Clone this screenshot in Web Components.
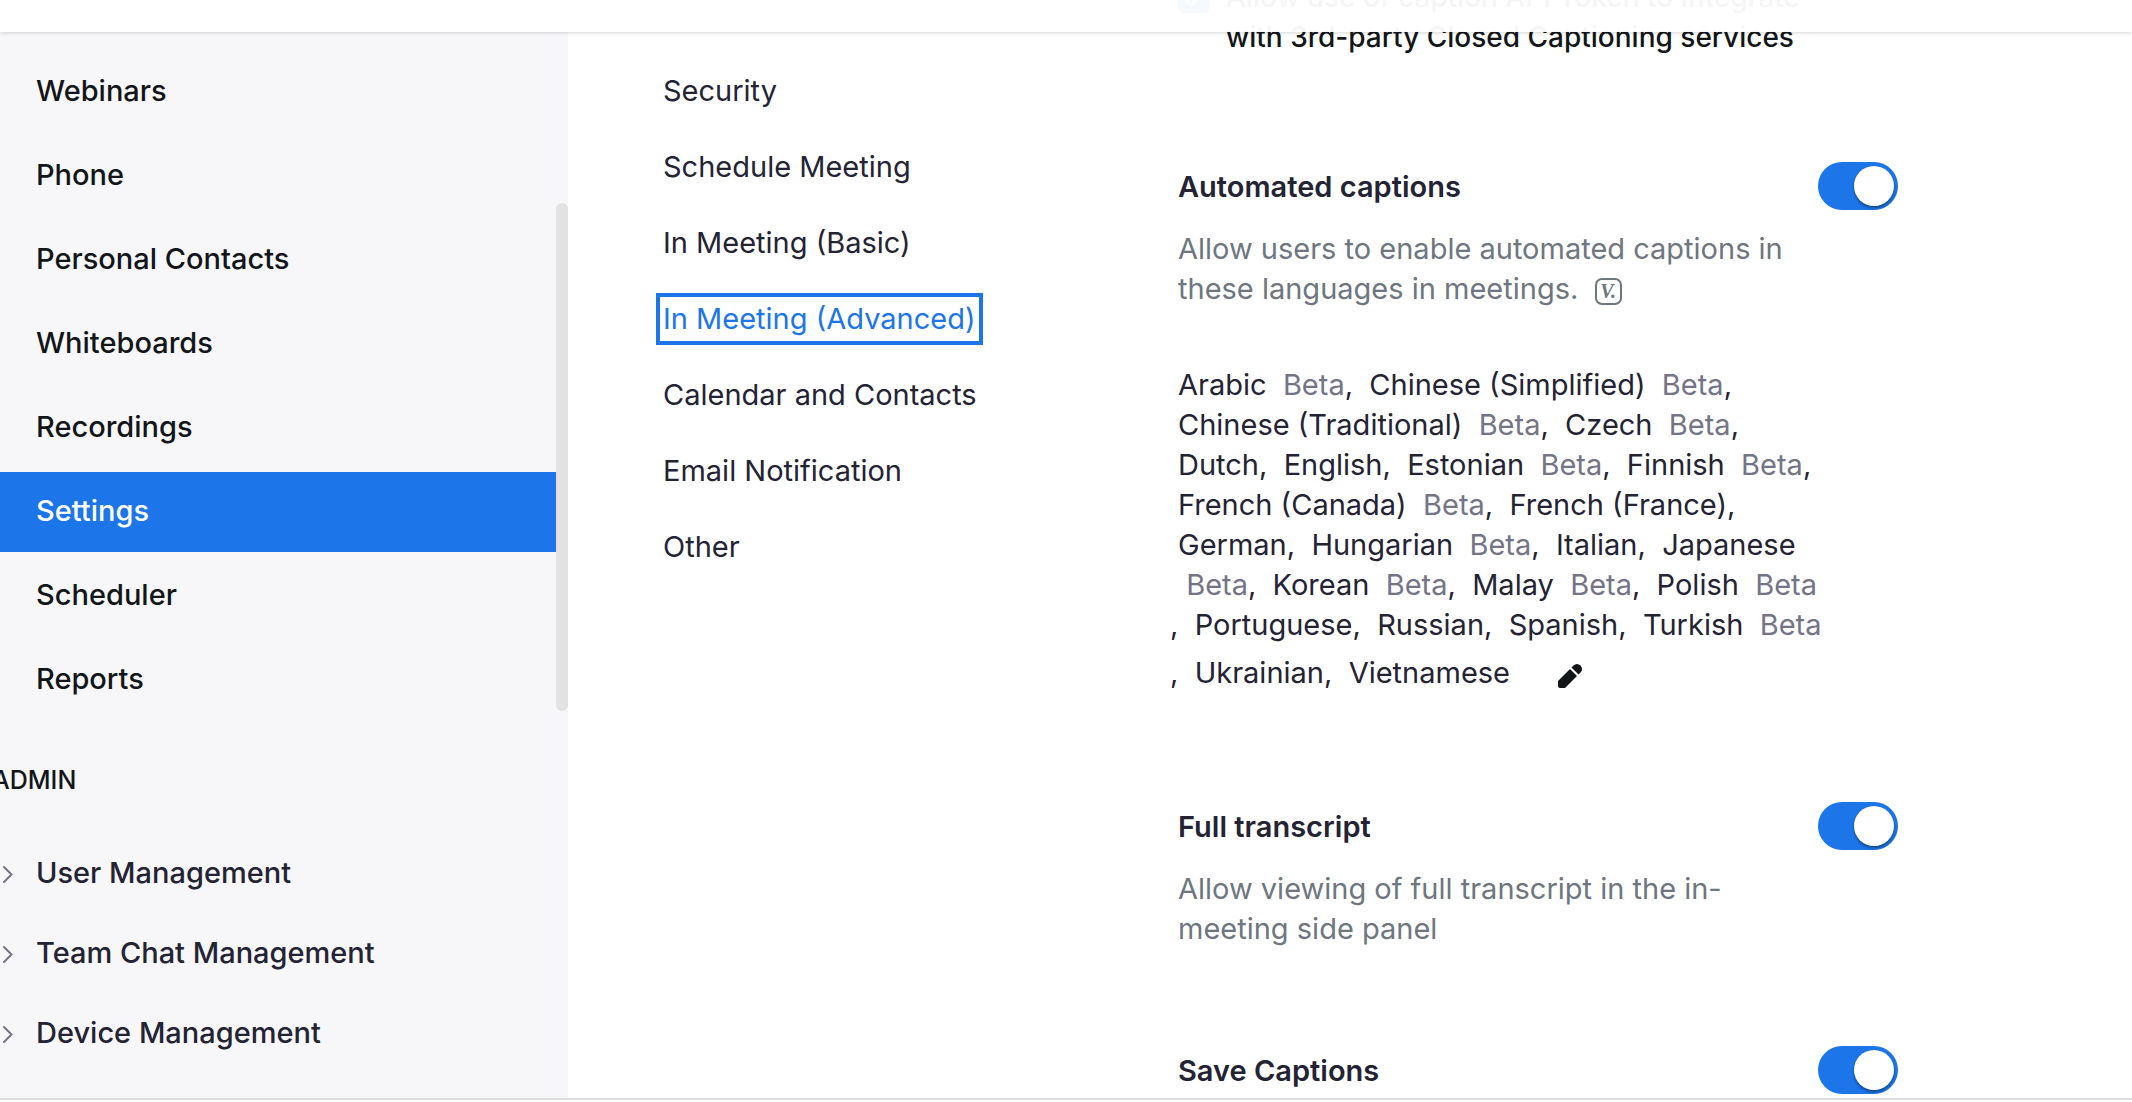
<!DOCTYPE html>
<html lang="en">
<head>
<meta charset="utf-8">
<meta name="viewport" content="width=device-width, initial-scale=1">
<title>Settings</title>
<style>
  :root {
    --blue: #1c75e9;
    --ink: #232333;
    --black: #131619;
    --muted: #6e7680;
    --beta: #747487;
    --panel: #f7f7fa;
  }
  body {
    margin: 0;
    background: #fff;
    color: var(--ink);
    font: 400 29px/40px Inter, "Liberation Sans", sans-serif;
  }
</style>
</head>
<body>
<settings-page>
  <side-nav slot="side">
    <side-item>Webinars</side-item>
    <side-item>Phone</side-item>
    <side-item>Personal Contacts</side-item>
    <side-item>Whiteboards</side-item>
    <side-item>Recordings</side-item>
    <side-item active>Settings</side-item>
    <side-item>Scheduler</side-item>
    <side-item>Reports</side-item>
    <side-group slot="admin">User Management</side-group>
    <side-group slot="admin">Team Chat Management</side-group>
    <side-group slot="admin">Device Management</side-group>
  </side-nav>

  <section-nav slot="sections">
    <section-link>Security</section-link>
    <section-link>Schedule Meeting</section-link>
    <section-link>In Meeting (Basic)</section-link>
    <section-link active>In Meeting (Advanced)</section-link>
    <section-link>Calendar and Contacts</section-link>
    <section-link>Email Notification</section-link>
    <section-link>Other</section-link>
  </section-nav>

  <caption-token-option></caption-token-option>
  <setting-row name="Automated captions">
    Allow users to enable automated captions in<br>these languages in meetings. <modified-tag></modified-tag>
    <language-list slot="extra"></language-list>
  </setting-row>
  <setting-row name="Full transcript">
    Allow viewing of full transcript in the in-<br>meeting side panel
  </setting-row>
  <setting-row name="Save Captions"></setting-row>
</settings-page>

<script>
class SettingsPage extends HTMLElement {
  connectedCallback() {
    if (this.shadowRoot) return;
    this.attachShadow({ mode: 'open' }).innerHTML = `
      <style>
        :host {
          display: grid;
          grid-template-columns: 568px 610px minmax(0, 1fr);
          height: calc(100vh - 2px);
          overflow: hidden;
          position: relative;
          box-sizing: border-box;
          border-bottom: 2px solid #dcdcdc;
        }

        header {
          position: absolute;
          top: 0;
          left: 0;
          right: 0;
          height: 32px;
          background: rgba(255, 255, 255, 0.96);
          box-shadow: 0 1px 4px rgba(0, 0, 0, 0.16);
          z-index: 1;
        }

        main {
          max-width: 720px;
          margin-top: -23px;
        }
      </style>
      <header></header>
      <slot name="side"></slot>
      <slot name="sections"></slot>
      <main><slot></slot></main>
    `;
  }
}

class SideNav extends HTMLElement {
  connectedCallback() {
    if (this.shadowRoot) return;
    this.attachShadow({ mode: 'open' }).innerHTML = `
      <style>
        :host {
          display: flex;
          background: var(--panel);
          min-height: 0;
        }

        nav {
          flex: 1;
          padding-top: 52px;
          font-weight: 500;
          overflow: hidden;
        }

        .personal {
          display: flex;
          flex-direction: column;
          gap: 4px;
        }

        h2 {
          margin: 40px 0 34px -8px;
          font-size: 25px;
          font-weight: 500;
          line-height: 40px;
          color: var(--black);
        }

        .thumb {
          width: 12px;
          height: 508px;
          margin-top: 203px;
          border-radius: 6px;
          background: #e2e2e2;
        }
      </style>
      <nav aria-label="Account">
        <div class="personal"><slot></slot></div>
        <h2>ADMIN</h2>
        <slot name="admin"></slot>
      </nav>
      <div class="thumb"></div>
    `;
  }
}

class SideItem extends HTMLElement {
  connectedCallback() {
    if (this.shadowRoot) return;
    this.attachShadow({ mode: 'open' }).innerHTML = `
      <style>
        :host { display: block; }

        a {
          display: block;
          padding: 19px 36px 21px;
          color: var(--black);
          text-decoration: none;
        }

        :host([active]) a {
          background: var(--blue);
          color: #fff;
        }
      </style>
      <a href="#"><slot></slot></a>
    `;
  }
}

class SideGroup extends HTMLElement {
  connectedCallback() {
    if (this.shadowRoot) return;
    this.attachShadow({ mode: 'open' }).innerHTML = `
      <style>
        :host { display: block; }

        a {
          display: flex;
          align-items: center;
          gap: 20px;
          padding: 19px 0 21px;
          color: var(--ink);
          text-decoration: none;
        }

        svg {
          width: 16px;
          height: 20px;
          fill: none;
          stroke: var(--beta);
          stroke-width: 2;
          stroke-linecap: round;
          stroke-linejoin: round;
        }
      </style>
      <a href="#">
        <svg viewBox="0 0 16 20"><path d="M4 4l7.500 7.500-7.500 7.500"/></svg>
        <slot></slot>
      </a>
    `;
  }
}

class SectionNav extends HTMLElement {
  connectedCallback() {
    if (this.shadowRoot) return;
    this.attachShadow({ mode: 'open' }).innerHTML = `
      <style>
        :host { display: block; }

        nav {
          display: flex;
          flex-direction: column;
          align-items: flex-start;
          gap: 24px;
          padding: 65px 0 0 88px;
        }
      </style>
      <nav aria-label="Settings sections"><slot></slot></nav>
    `;
  }
}

class SectionLink extends HTMLElement {
  connectedCallback() {
    if (this.shadowRoot) return;
    this.attachShadow({ mode: 'open' }).innerHTML = `
      <style>
        :host { display: block; }

        a {
          display: block;
          line-height: 52px;
          padding: 0 7px;
          color: var(--ink);
          text-decoration: none;
        }

        :host([active]) a {
          color: var(--blue);
          outline: 4px solid var(--blue);
          outline-offset: -4px;
        }
      </style>
      <a href="#"><slot></slot></a>
    `;
  }
}

class CaptionTokenOption extends HTMLElement {
  connectedCallback() {
    if (this.shadowRoot) return;
    this.attachShadow({ mode: 'open' }).innerHTML = `
      <style>
        :host {
          display: block;
          margin-bottom: 105px;
          color: var(--black);
          font-size: 28px;
          font-weight: 500;
        }

        label {
          display: flex;
          gap: 16px;
        }

        input {
          appearance: none;
          flex: none;
          display: grid;
          place-items: center;
          width: 32px;
          height: 32px;
          margin: 4px 0 0;
          border-radius: 6px;
          background: var(--blue);
        }

        /* tick */
        input::before {
          content: "";
          width: 7px;
          height: 14px;
          border: solid #fff;
          border-width: 0 3px 3px 0;
          rotate: 45deg;
        }
      </style>
      <label>
        <input type="checkbox" checked>
        <span>Allow use of caption API Token to integrate<br>with 3rd-party Closed Captioning services</span>
      </label>
    `;
  }
}

class SettingRow extends HTMLElement {
  connectedCallback() {
    if (this.shadowRoot) return;
    const name = this.getAttribute('name');
    this.attachShadow({ mode: 'open' }).innerHTML = `
      <style>
        :host {
          display: block;
          margin-bottom: 97px;
        }

        .head {
          display: flex;
          align-items: center;
          justify-content: space-between;
          height: 48px;
        }

        label {
          padding-top: 2px;
          font-weight: 600;
        }

        input {
          appearance: none;
          flex: none;
          display: grid;
          justify-content: end;
          width: 80px;
          height: 48px;
          margin: 0;
          padding: 4px;
          box-sizing: border-box;
          border-radius: 24px;
          background: var(--blue);
        }

        input::before {
          content: "";
          width: 40px;
          height: 40px;
          border-radius: 50%;
          background: #fff;
          box-shadow: 0 2px 3px rgba(0, 0, 0, 0.4);
        }

        p {
          margin: 19px 0 0;
          color: var(--muted);
        }
      </style>
      <div class="head">
        <label for="toggle">${name}</label>
        <input id="toggle" type="checkbox" role="switch" checked>
      </div>
      <p><slot></slot></p>
      <slot name="extra"></slot>
    `;
  }
}

class ModifiedTag extends HTMLElement {
  connectedCallback() {
    if (this.shadowRoot) return;
    this.attachShadow({ mode: 'open' }).innerHTML = `
      <style>
        :host {
          display: inline-block;
          box-sizing: border-box;
          width: 27px;
          height: 27px;
          margin-left: 8px;
          border: 2px solid var(--muted);
          border-radius: 7px;
          font: italic 700 20px/22px "Liberation Serif", serif;
          text-align: center;
          vertical-align: middle;
        }
      </style>V.`;
  }
}

// "*" stands for the beta mark after a language
const LANGUAGE_LINES = [
  'Arabic  *,  Chinese (Simplified)  *,',
  'Chinese (Traditional)  *,  Czech  *,',
  'Dutch,  English,  Estonian  *,  Finnish  *,',
  'French (Canada)  *,  French (France),',
  'German,  Hungarian  *,  Italian,  Japanese',
  ' *,  Korean  *,  Malay  *,  Polish  *',
  ',  Portuguese,  Russian,  Spanish,  Turkish  *',
  ',  Ukrainian,  Vietnamese'
];

class LanguageList extends HTMLElement {
  connectedCallback() {
    if (this.shadowRoot) return;
    const lines = LANGUAGE_LINES.map((line) => {
      const cls = line.startsWith(',') ? 'line hang' : 'line';
      return `<div class="${cls}">${line.replace(/\*/g, '<span>Beta</span>')}</div>`;
    });
    const last = lines.pop();
    this.attachShadow({ mode: 'open' }).innerHTML = `
      <style>
        :host {
          display: block;
          margin-top: 56px;
        }

        .line { white-space: pre; }
        .hang { margin-left: -8px; }
        span { color: var(--beta); }

        .last {
          display: flex;
          align-items: center;
          gap: 44px;
          height: 56px;
          padding-bottom: 4px;
        }

        button {
          display: flex;
          padding: 6px 4px 0;
          border: 0;
          background: none;
        }

        svg {
          width: 24px;
          height: 24px;
          fill: var(--black);
        }
      </style>
      ${lines.join('')}
      <div class="last">
        ${last}
        <button aria-label="Edit languages">
          <svg viewBox="0 0 24 24"><path d="M0 17L12 5l7 7L7 24H2q-2 0-2-2z"/><path d="M13.500 3.500l2-2q1.500-1.500 3.500-1.500t3.500 1.500 1.500 3.500-1.500 3.500l-2 2z"/></svg>
        </button>
      </div>
    `;
  }
}

customElements.define('settings-page', SettingsPage);
customElements.define('side-nav', SideNav);
customElements.define('side-item', SideItem);
customElements.define('side-group', SideGroup);
customElements.define('section-nav', SectionNav);
customElements.define('section-link', SectionLink);
customElements.define('caption-token-option', CaptionTokenOption);
customElements.define('setting-row', SettingRow);
customElements.define('modified-tag', ModifiedTag);
customElements.define('language-list', LanguageList);
</script>
</body>
</html>
